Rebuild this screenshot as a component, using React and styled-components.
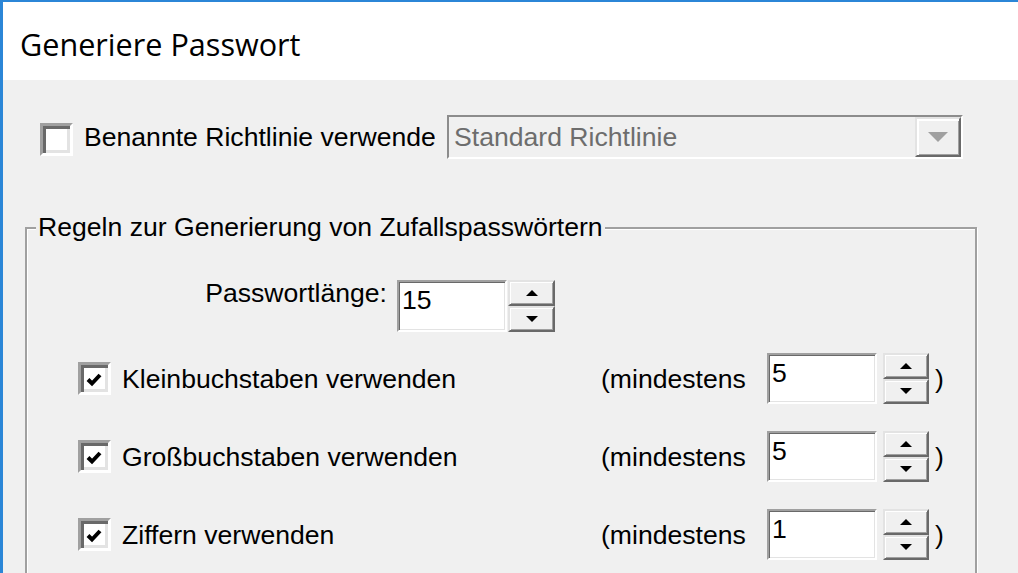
import React from 'react';
import styled, { createGlobalStyle } from 'styled-components';

const Global = createGlobalStyle`
  html, body { margin: 0; padding: 0; background: #f0f0f0; }
  body { width: 1018px; height: 573px; overflow: hidden; }
`;

const Window = styled.div`
  width: 1018px;
  height: 573px;
  box-sizing: border-box;
  border-top: 2px solid #2b86d7;
  border-left: 3px solid #2b86d7;
  background: #f0f0f0;
  overflow: hidden;
  font-family: "Liberation Sans", Arial, sans-serif;
  font-size: 26.6px;
  color: #000;
`;

const TitleBar = styled.div`
  height: 78px;
  box-sizing: border-box;
  padding: 5px 0 0 17px;
  background: #fff;
  display: flex;
  align-items: center;
  font-family: "Open Sans", "Noto Sans", sans-serif;
  font-size: 30.6px;
  color: #000;
`;

const Body = styled.div`
  padding: 35px 0 40px 0;
`;

const PolicyRow = styled.div`
  display: flex;
  align-items: center;
  height: 44px;
  padding-left: 37px;
`;

const CheckBox = styled.span`
  flex: none;
  width: 33px;
  height: 33px;
  box-sizing: border-box;
  border: 3px solid;
  border-color: #a0a0a0 #fff #fff #a0a0a0;
  box-shadow: inset 3px 3px 0 #696969, inset -3px -3px 0 #e3e3e3;
  background: #fff;
  display: flex;
  align-items: center;
  justify-content: center;
  align-self: ${p => (p.$top ? 'flex-start' : 'center')};
  margin-top: ${p => p.$top || 0}px;
  svg { margin: 2px 1px 0 0; }
`;

const PolicyLabel = styled.span`
  width: 351px;
  margin-left: 11px;
  overflow: hidden;
  white-space: nowrap;
  line-height: 30px;
`;

const Combo = styled.div`
  margin-left: 12px;
  width: 516px;
  height: 44px;
  box-sizing: border-box;
  border: 2px solid;
  border-color: #8c8c8c #fff #fff #8c8c8c;
  display: flex;
  align-items: stretch;
  background: #f0f0f0;
`;

const ComboText = styled.span`
  flex: 1;
  display: flex;
  align-items: center;
  padding-left: 5px;
  color: #6d6d6d;
  white-space: nowrap;
`;

const DropButton = styled.span`
  width: 46px;
  box-sizing: border-box;
  border: 2px solid;
  border-color: #e3e3e3 #696969 #696969 #e3e3e3;
  box-shadow: inset 2px 2px 0 #fff, inset -1px -1px 0 #a0a0a0;
  display: flex;
  align-items: center;
  justify-content: center;
  &::after {
    content: "";
    border-left: 10px solid transparent;
    border-right: 10px solid transparent;
    border-top: 10px solid #a0a0a0;
  }
`;

const GroupBox = styled.div`
  margin: 68px 0 0 22px;
  width: 952px;
  height: 420px;
  box-sizing: border-box;
  border: 2px solid #a0a0a0;
  box-shadow: inset 1px 1px 0 #fff, 1px 1px 0 #fff;
`;

const Legend = styled.div`
  display: table;
  margin: -17px 0 0 9px;
  padding: 0 2px;
  background: #f0f0f0;
  line-height: 30px;
  white-space: nowrap;
`;

const PassRow = styled.div`
  display: flex;
  align-items: flex-start;
  margin-top: 38px;
`;

const PassLabel = styled.span`
  width: 188px;
  margin: -2px 10px 0 172px;
  text-align: right;
  line-height: 30px;
  white-space: nowrap;
`;

const Field = styled.div`
  flex: none;
  width: 110px;
  height: ${p => p.$h}px;
  box-sizing: border-box;
  border: 2px solid;
  border-color: #a0a0a0 #fff #fff #a0a0a0;
  box-shadow: inset 1px 1px 0 #696969, inset -1px -1px 0 #e3e3e3;
  background: #fff;
  padding: 3px 0 0 3px;
  line-height: 30px;
`;

const Spinner = styled.div`
  flex: none;
  display: flex;
  flex-direction: column;
  width: ${p => p.$w}px;
  height: ${p => p.$h}px;
  margin-left: ${p => p.$gap}px;
`;

const SpinButton = styled.div`
  flex: 1;
  box-sizing: border-box;
  border: 2px solid;
  border-color: #e3e3e3 #696969 #696969 #e3e3e3;
  box-shadow: inset 1px 1px 0 #fff, inset -1px -1px 0 #a0a0a0;
  background: #f0f0f0;
  display: flex;
  align-items: center;
  justify-content: center;
  &::after {
    content: "";
    border-left: 6px solid transparent;
    border-right: 6px solid transparent;
    ${p => (p.$up ? 'border-bottom: 6px solid #000;' : 'border-top: 6px solid #000;')}
  }
`;

const CheckRows = styled.div`
  display: flex;
  flex-direction: column;
  gap: 27px;
  margin-top: 21px;
`;

const CheckRow = styled.div`
  display: flex;
  align-items: center;
  height: 51px;
  padding-left: 51px;
`;

const CheckLabel = styled.span`
  width: 479px;
  margin-left: 11px;
  line-height: 30px;
  white-space: nowrap;
`;

const MinLabel = styled.span`
  width: 166px;
  line-height: 30px;
  white-space: nowrap;
`;

const Paren = styled.span`
  margin-left: 6px;
  line-height: 30px;
`;

const Check = () => (
  <svg width="16" height="14" viewBox="0 0 16 14">
    <polyline points="2,6.5 6,10.5 14,2" fill="none" stroke="#000" strokeWidth="4" />
  </svg>
);

const Spin = ({ w, h, gap }) => (
  <Spinner $w={w} $h={h} $gap={gap}>
    <SpinButton $up />
    <SpinButton />
  </Spinner>
);

const rules = [
  { label: 'Kleinbuchstaben verwenden', value: '5' },
  { label: 'Großbuchstaben verwenden', value: '5' },
  { label: 'Ziffern verwenden', value: '1' },
];

export default function App() {
  return (
    <>
      <Global />
      <Window>
        <TitleBar>Generiere Passwort</TitleBar>
        <Body>
          <PolicyRow>
            <CheckBox $top={8} />
            <PolicyLabel>Benannte Richtlinie verwenden</PolicyLabel>
            <Combo>
              <ComboText>Standard Richtlinie</ComboText>
              <DropButton />
            </Combo>
          </PolicyRow>
          <GroupBox>
            <Legend>Regeln zur Generierung von Zufallspasswörtern</Legend>
            <PassRow>
              <PassLabel>Passwortlänge:</PassLabel>
              <Field $h={52}>15</Field>
              <Spin w={47} h={52} gap={1} />
            </PassRow>
            <CheckRows>
              {rules.map(r => (
                <CheckRow key={r.label}>
                  <CheckBox>
                    <Check />
                  </CheckBox>
                  <CheckLabel>{r.label}</CheckLabel>
                  <MinLabel>(mindestens</MinLabel>
                  <Field $h={51}>{r.value}</Field>
                  <Spin w={46} h={51} gap={6} />
                  <Paren>)</Paren>
                </CheckRow>
              ))}
            </CheckRows>
          </GroupBox>
        </Body>
      </Window>
    </>
  );
}
